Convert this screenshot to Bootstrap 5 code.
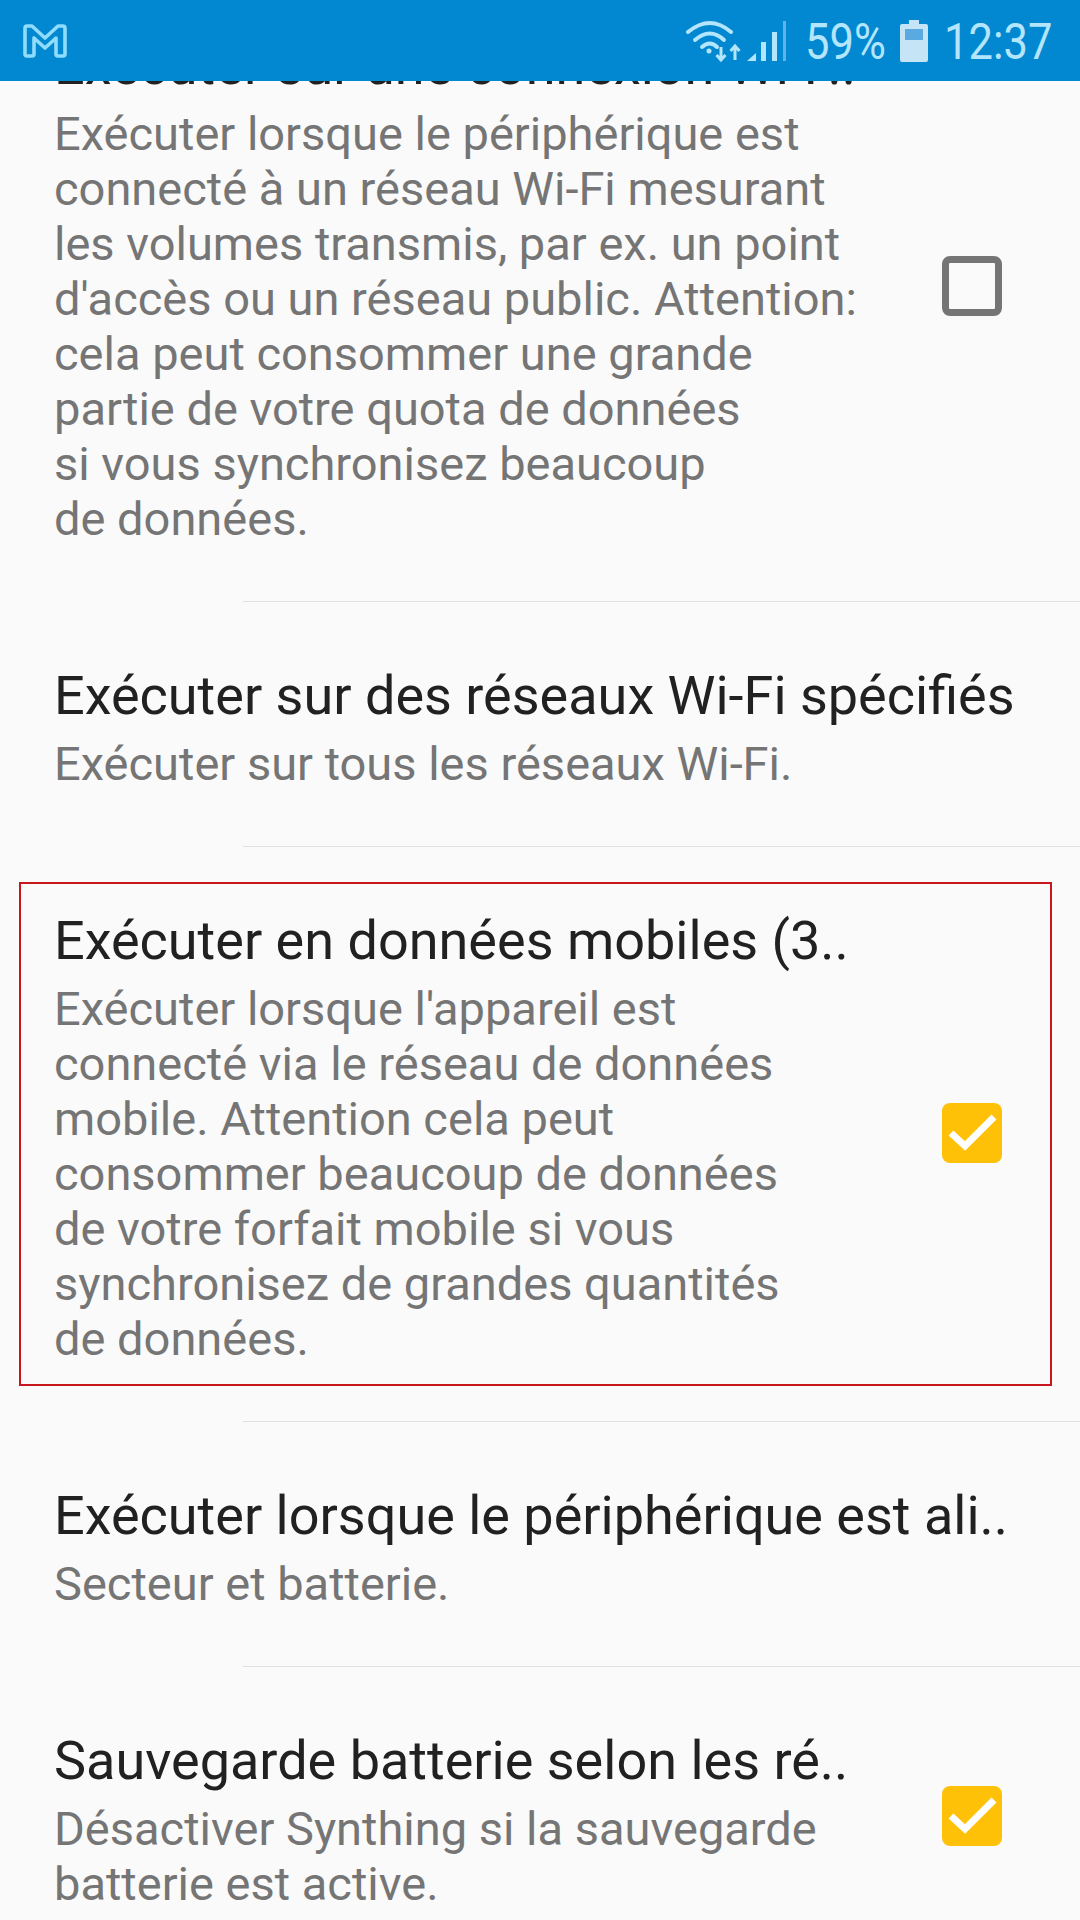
<!DOCTYPE html>
<html lang="fr">

<head>
    <meta charset="UTF-8">
    <meta name="viewport" content="width=device-width, initial-scale=1.0">
    <title>Syncthing</title>
    <link href="https://cdn.jsdelivr.net/npm/bootstrap@5.3.3/dist/css/bootstrap.min.css" rel="stylesheet">
    <style>
        html, body {
            height: 1920px;
            overflow: hidden;
        }
        body {
            background-color: #fafafa;
            font-family: Roboto, "Liberation Sans", sans-serif;
        }
        .status-bar {
            height: 81px;
            padding: 0 27px 0 23px;
            background-color: #0288d1;
            color: #b3e5fc;
            position: relative;
            z-index: 2;
        }
        /* digits in the bar are narrower than plain Roboto */
        .status-text {
            display: inline-block;
            font-size: 50px;
            line-height: 81px;
            padding-top: 4px;
            transform: scaleX(.87);
            transform-origin: left center;
        }
        .signal-icon {
            margin-left: 5px;
        }
        .pct-text {
            margin-left: 18px;
            margin-right: -12px;
        }
        .batt-icon {
            margin-left: 15px;
        }
        .clock-text {
            margin-left: 16px;
            margin-right: -16px;
        }
        .pref-list {
            margin-top: -109px;
        }
        .pref-item {
            padding: 58px 0 55px 54px;
        }
        .pref-sep {
            height: 1px;
            margin-left: 243px;
            background-color: #e0e0e0;
        }
        .pref-title {
            font-size: 54px;
            line-height: 72px;
            color: #212121;
            margin-bottom: 4px;
            white-space: nowrap;
        }
        .pref-sub {
            font-size: 47px;
            line-height: 55px;
            color: #757575;
            white-space: nowrap;
        }
        .check-col {
            width: 138px;
            padding-right: 78px;
            padding-bottom: 5px;
            flex-shrink: 0;
        }
        .check-off, .check-on {
            display: block;
            width: 60px;
            height: 60px;
            border-radius: 8px;
        }
        .check-off {
            border: 7px solid #757575;
        }
        .check-on {
            background-color: #ffc107;
        }
        .red-box {
            position: absolute;
            left: 19px;
            top: 882px;
            width: 1033px;
            height: 504px;
            border: 2px solid #c8161d;
            pointer-events: none;
        }
    </style>
</head>

<body>
    <div class="status-bar d-flex align-items-center justify-content-between">
        <svg width="44" height="34" viewBox="0 0 44 34" fill="none" stroke="#8fdcfb" stroke-width="3.6" stroke-linejoin="round">
            <path d="M2 4 Q2 2 4 2 H9 L22 14 L35 2 H40 Q42 2 42 4 V30 Q42 32 40 32 H35 Q33 32 33 30 V14 L22 24 L11 14 V30 Q11 32 9 32 H4 Q2 32 2 30 Z" />
        </svg>
        <div class="d-flex align-items-center">
            <svg width="56" height="44" viewBox="0 0 56 44" fill="none" stroke="#b3e5fc" stroke-width="4" stroke-linecap="round">
                <path d="M2 13 Q24 -5 45 13" />
                <path d="M9 21 Q24 8 38 21" />
                <path d="M16 28 Q24 21 31 28" />
                <circle cx="23" cy="32" r="2.500" fill="#b3e5fc" stroke="none" />
                <path d="M35 28 V41 M30.500 36 L35 41 L39.500 36" stroke-width="3" stroke-linecap="butt" />
                <path d="M49 41 V27 M44.500 32 L49 27 L53.500 32" stroke-width="3" stroke-linecap="butt" />
            </svg>
            <svg class="signal-icon" width="40" height="42" viewBox="0 0 40 42" fill="#b3e5fc">
                <path d="M0 41 L9 33 V41 Z" />
                <rect x="14" y="22" width="5" height="19" />
                <rect x="25" y="12" width="5" height="29" />
                <rect x="36" y="1" width="3" height="40" fill="#5fb4e5" />
            </svg>
            <span class="status-text pct-text">59%</span>
            <svg class="batt-icon" width="28" height="42" viewBox="0 0 28 42">
                <path d="M9 0 H19 V4 H26 Q28 4 28 6 V40 Q28 42 26 42 H2 Q0 42 0 40 V6 Q0 4 2 4 H9 Z" fill="#c5e4f6" />
                <rect x="5" y="9" width="18" height="11" fill="#5aa9e0" />
            </svg>
            <span class="status-text clock-text">12:37</span>
        </div>
    </div>

    <div class="pref-list">
        <div class="pref-item d-flex align-items-center">
            <div class="flex-grow-1">
                <div class="pref-title">Exécuter sur une connexion Wi-F..</div>
                <div class="pref-sub">Exécuter lorsque le périphérique est<br>connecté à un réseau Wi-Fi mesurant<br>les volumes transmis, par ex. un point<br>d'accès ou un réseau public. Attention:<br>cela peut consommer une grande<br>partie de votre quota de données<br>si vous synchronisez beaucoup<br>de données.</div>
            </div>
            <div class="check-col"><span class="check-off"></span></div>
        </div>
        <div class="pref-sep"></div>
        <div class="pref-item">
            <div class="pref-title">Exécuter sur des réseaux Wi-Fi spécifiés</div>
            <div class="pref-sub">Exécuter sur tous les réseaux Wi-Fi.</div>
        </div>
        <div class="pref-sep"></div>
        <div class="pref-item d-flex align-items-center">
            <div class="flex-grow-1">
                <div class="pref-title">Exécuter en données mobiles (3..</div>
                <div class="pref-sub">Exécuter lorsque l'appareil est<br>connecté via le réseau de données<br>mobile. Attention cela peut<br>consommer beaucoup de données<br>de votre forfait mobile si vous<br>synchronisez de grandes quantités<br>de données.</div>
            </div>
            <div class="check-col">
                <span class="check-on">
                    <svg class="d-block" width="60" height="60" viewBox="0 0 60 60" fill="none" stroke="#fff" stroke-width="7">
                        <path d="M9 30 L23 43 L52 14" />
                    </svg>
                </span>
            </div>
        </div>
        <div class="pref-sep"></div>
        <div class="pref-item">
            <div class="pref-title">Exécuter lorsque le périphérique est ali..</div>
            <div class="pref-sub">Secteur et batterie.</div>
        </div>
        <div class="pref-sep"></div>
        <div class="pref-item d-flex align-items-center">
            <div class="flex-grow-1">
                <div class="pref-title">Sauvegarde batterie selon les ré..</div>
                <div class="pref-sub">Désactiver Synthing si la sauvegarde<br>batterie est active.</div>
            </div>
            <div class="check-col">
                <span class="check-on">
                    <svg class="d-block" width="60" height="60" viewBox="0 0 60 60" fill="none" stroke="#fff" stroke-width="7">
                        <path d="M9 30 L23 43 L52 14" />
                    </svg>
                </span>
            </div>
        </div>
    </div>

    <div class="red-box"></div>

    <script src="https://cdn.jsdelivr.net/npm/bootstrap@5.3.3/dist/js/bootstrap.bundle.min.js"></script>
</body>

</html>
